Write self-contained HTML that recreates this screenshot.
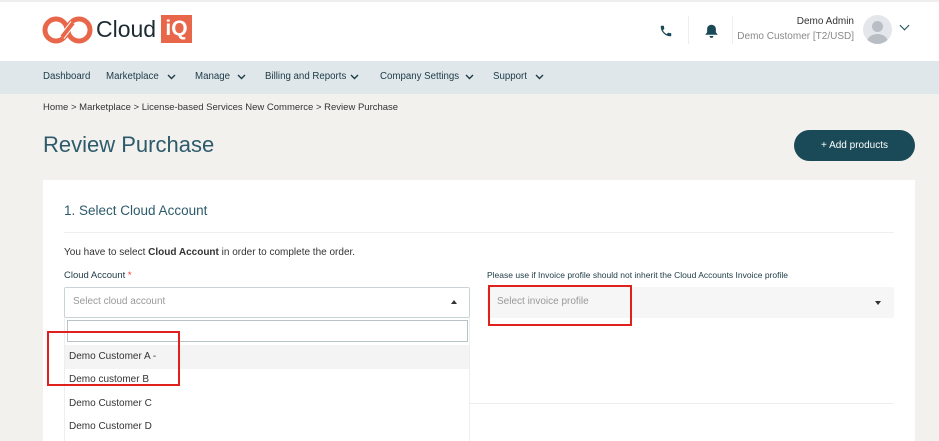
<!DOCTYPE html>
<html><head><style>
*{margin:0;padding:0;box-sizing:border-box}
html,body{width:939px;height:441px;overflow:hidden}
body{background:#f2f1ee;font-family:"Liberation Sans",sans-serif;position:relative;color:#333}
.a{position:absolute;white-space:nowrap}
.n{position:absolute;top:71px;font-size:9.7px;color:#1d3a45;white-space:nowrap}
.c{position:absolute;top:74px}
</style></head><body>
<div class="a" style="left:0;top:0;width:939px;height:61px;background:#fff;border-top:2px solid #eee"></div>
<svg class="a" style="left:42px;top:15px" width="52" height="30" viewBox="0 0 52 30">
<circle cx="14" cy="15" r="11" fill="none" stroke="#e8674a" stroke-width="5"/>
<circle cx="37" cy="15" r="11" fill="none" stroke="#e8674a" stroke-width="5"/>
<line x1="20" y1="22" x2="31" y2="8" stroke="#fff" stroke-width="6"/>
<line x1="20" y1="22" x2="31" y2="8" stroke="#e8674a" stroke-width="4"/>
</svg>
<div class="a" style="left:96px;top:16px;font-size:23px;color:#1d2b33">Cloud</div>
<div class="a" style="left:161px;top:15px;width:31px;height:28px;background:#e8674a;color:#fff;font-size:21px;font-weight:bold;text-align:center;line-height:28px">iQ</div>
<svg class="a" style="left:659px;top:24px" width="14" height="14" viewBox="0 0 24 24"><path d="M6.6 10.8c1.4 2.8 3.8 5.1 6.6 6.6l2.2-2.2c.3-.3.7-.4 1-.2 1.1.4 2.3.6 3.6.6.6 0 1 .4 1 1V20c0 .6-.4 1-1 1C10.6 21 3 13.4 3 4c0-.6.4-1 1-1h3.5c.6 0 1 .4 1 1 0 1.3.2 2.5.6 3.6.1.3 0 .7-.2 1z" fill="#1a4a57"/></svg>
<div class="a" style="left:688px;top:16px;width:1px;height:28px;background:#eee"></div>
<svg class="a" style="left:704px;top:23px" width="15" height="16" viewBox="0 0 24 24"><path d="M12 2c-4 0-7 3-7 7v5l-3 4h20l-3-4V9c0-4-3-7-7-7zM9 20a3 3 0 006 0z" fill="#1a4a57"/></svg>
<div class="a" style="left:732px;top:16px;width:1px;height:28px;background:#eee"></div>
<div class="a" style="left:700px;top:16px;width:154px;text-align:right;font-size:10px;color:#333">Demo Admin</div>
<div class="a" style="left:700px;top:31px;width:154px;text-align:right;font-size:10px;color:#888">Demo Customer [T2/USD]</div>
<div class="a" style="left:863px;top:15px;width:29px;height:29px;border-radius:50%;background:#e3e6ea;overflow:hidden"><div class="a" style="left:9px;top:6px;width:11px;height:11px;border-radius:50%;background:#b9bec4"></div><div class="a" style="left:4px;top:19px;width:21px;height:16px;border-radius:50%;background:#b9bec4"></div></div>
<div class="a" style="left:901px;top:22px;width:7px;height:7px;border-right:1.5px solid #1a4a57;border-bottom:1.5px solid #1a4a57;transform:rotate(45deg)"></div>
<div class="a" style="left:0;top:61px;width:939px;height:33px;background:#dfe7ea"></div>
<div class="n" style="left:43px">Dashboard</div>
<div class="n" style="left:106px">Marketplace</div>
<div class="n" style="left:195px">Manage</div>
<div class="n" style="left:265px">Billing and Reports</div>
<div class="n" style="left:380px">Company Settings</div>
<div class="n" style="left:493px">Support</div>
<svg class="c" style="left:167px" width="9" height="6" viewBox="0 0 9 6"><path d="M1 1l3.5 3.5L8 1" fill="none" stroke="#1d3a45" stroke-width="1.4"/></svg>
<svg class="c" style="left:237px" width="9" height="6" viewBox="0 0 9 6"><path d="M1 1l3.5 3.5L8 1" fill="none" stroke="#1d3a45" stroke-width="1.4"/></svg>
<svg class="c" style="left:350px" width="9" height="6" viewBox="0 0 9 6"><path d="M1 1l3.5 3.5L8 1" fill="none" stroke="#1d3a45" stroke-width="1.4"/></svg>
<svg class="c" style="left:465px" width="9" height="6" viewBox="0 0 9 6"><path d="M1 1l3.5 3.5L8 1" fill="none" stroke="#1d3a45" stroke-width="1.4"/></svg>
<svg class="c" style="left:535px" width="9" height="6" viewBox="0 0 9 6"><path d="M1 1l3.5 3.5L8 1" fill="none" stroke="#1d3a45" stroke-width="1.4"/></svg>
<div class="a" style="left:43px;top:102px;font-size:9.5px;color:#333">Home &gt; Marketplace &gt; License-based Services New Commerce &gt; Review Purchase</div>
<div class="a" style="left:43px;top:132px;font-size:22px;color:#2d5b6b">Review Purchase</div>
<div class="a" style="left:794px;top:130px;width:121px;height:31px;border-radius:16px;background:#1a4a57;color:#fff;font-size:10px;text-align:center;line-height:31px">+ Add products</div>
<div class="a" style="left:43px;top:180px;width:872px;height:261px;background:#fff"></div>
<div class="a" style="left:64px;top:203px;font-size:13.5px;color:#2d5b6b">1. Select Cloud Account</div>
<div class="a" style="left:64px;top:232px;width:830px;height:1px;background:#eee"></div>
<div class="a" style="left:64px;top:247px;font-size:10px;color:#333">You have to select <b>Cloud Account</b> in order to complete the order.</div>
<div class="a" style="left:64px;top:270px;font-size:9.5px;color:#1d3a45">Cloud Account <span style="color:#e33">*</span></div>
<div class="a" style="left:64px;top:287px;width:406px;height:31px;border:1px solid #c9d4d8;border-radius:2px"></div>
<div class="a" style="left:73px;top:296px;font-size:10px;color:#999">Select cloud account</div>
<div class="a" style="left:451px;top:300px;border-left:3px solid transparent;border-right:3px solid transparent;border-bottom:4px solid #333"></div>
<div class="a" style="left:64px;top:318px;width:406px;height:130px;background:#fff;border-left:1px solid #eee;border-right:1px solid #eee"></div>
<div class="a" style="left:67px;top:320px;width:401px;height:22px;border:1px solid #b8c3c7"></div>
<div class="a" style="left:65px;top:345px;width:404px;height:24px;background:#f4f4f4"></div>
<div class="a" style="left:69px;top:351px;font-size:10px;color:#333">Demo Customer A -</div>
<div class="a" style="left:69px;top:374px;font-size:10px;color:#333">Demo customer B</div>
<div class="a" style="left:69px;top:398px;font-size:10px;color:#333">Demo Customer C</div>
<div class="a" style="left:69px;top:421px;font-size:10px;color:#333">Demo Customer D</div>
<div class="a" style="left:487px;top:270px;font-size:8.5px;color:#1d3a45">Please use if Invoice profile should not inherit the Cloud Accounts Invoice profile</div>
<div class="a" style="left:487px;top:287px;width:407px;height:31px;background:#f6f6f6;border-radius:2px"></div>
<div class="a" style="left:497px;top:296px;font-size:10px;color:#999">Select invoice profile</div>
<div class="a" style="left:875px;top:301px;border-left:3px solid transparent;border-right:3px solid transparent;border-top:4px solid #333"></div>
<div class="a" style="left:470px;top:403px;width:424px;height:1px;background:#eee"></div>
<div class="a" style="left:47px;top:331px;width:133px;height:55px;border:2px solid #e0201c"></div>
<div class="a" style="left:488px;top:285px;width:144px;height:41px;border:2px solid #e0201c"></div>
</body></html>
